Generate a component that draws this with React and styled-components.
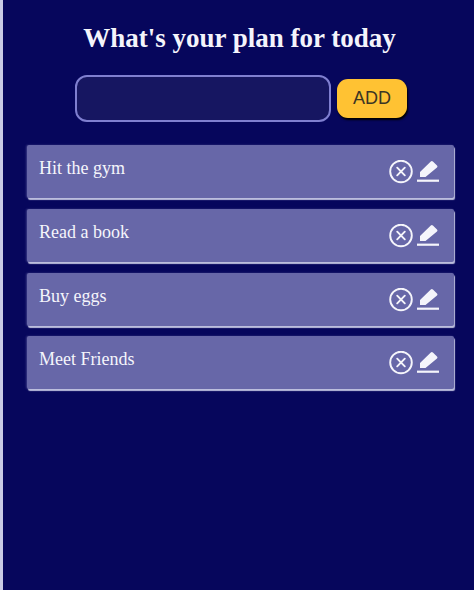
import React from 'react'
import styled, { createGlobalStyle } from 'styled-components'

const GlobalStyle = createGlobalStyle`
  html, body {
    margin: 0;
    padding: 0;
    background: #c9cbe6;
  }
`

const Page = styled.div`
  margin-left: 3px;
  height: 590px;
  background: #06065c;
  display: flex;
  flex-direction: column;
  overflow: hidden;
`

const Title = styled.h1`
  margin: 0;
  padding: 23px 0 0 2px;
  height: 75px;
  box-sizing: border-box;
  text-align: center;
  font-family: "Liberation Serif", serif;
  font-weight: bold;
  font-size: 27px;
  line-height: 31px;
  color: #f4f4fb;
`

const AddForm = styled.div`
  display: flex;
  align-items: center;
  gap: 6px;
  padding-left: 72px;
  height: 47px;
  margin-bottom: 23px;
`

const TaskInput = styled.input`
  width: 256px;
  height: 47px;
  box-sizing: border-box;
  background: #161661;
  border: 2px solid #7f7fd0;
  border-radius: 12px;
  outline: none;
  color: #fff;
`

const AddButton = styled.button`
  width: 70px;
  height: 39px;
  border: none;
  border-radius: 11px;
  background: #ffc233;
  color: #3b3524;
  font-family: "Liberation Sans", sans-serif;
  font-size: 18px;
  box-shadow: 1px 2px 2px #000;
`

const TaskList = styled.div`
  display: flex;
  flex-direction: column;
  gap: 10.75px;
  margin-left: 24px;
  width: 427px;
`

const TaskRow = styled.div`
  height: 53px;
  box-sizing: border-box;
  display: flex;
  justify-content: space-between;
  padding: 13px 15px 0 12px;
  background: #6767a8;
  border-radius: 2px;
  box-shadow: 1px 2px 1px #bcbedd, -1px 0 2px #3a3a85;
  font-family: "Liberation Serif", serif;
  font-size: 18px;
  line-height: 21px;
  color: #f5f5fb;
`

const Actions = styled.div`
  display: flex;
  align-items: flex-start;
  gap: 4px;
  padding-top: 2px;
`

const CancelIcon = () => (
  <svg width="24" height="24" viewBox="0 0 24 24" fill="none" stroke="#f5f5fb" strokeLinecap="round">
    <circle cx="12" cy="11.5" r="10.8" strokeWidth="1.9" />
    <path d="M8.2 7.7l7.6 7.6M15.8 7.7l-7.6 7.6" strokeWidth="1.9" />
  </svg>
)

const EditIcon = () => (
  <svg width="22" height="22" viewBox="0 0 22 22" fill="#f5f5fb">
    <path d="M3 17 L3 12 L13.8 1.4 a1.5 1.5 0 0 1 2.1 0 L20 5.4 a1.5 1.5 0 0 1 0 2.1 L8.5 17 Z" />
    <rect x="0" y="19.6" width="22" height="2.2" />
  </svg>
)

const tasks = ['Hit the gym', 'Read a book', 'Buy eggs', 'Meet Friends']

function App() {
  return (
    <>
      <GlobalStyle />
      <Page>
        <Title>What's your plan for today</Title>
        <AddForm>
          <TaskInput />
          <AddButton>ADD</AddButton>
        </AddForm>
        <TaskList>
          {tasks.map((task) => (
            <TaskRow key={task}>
              <span>{task}</span>
              <Actions>
                <CancelIcon />
                <EditIcon />
              </Actions>
            </TaskRow>
          ))}
        </TaskList>
      </Page>
    </>
  )
}

export default App
